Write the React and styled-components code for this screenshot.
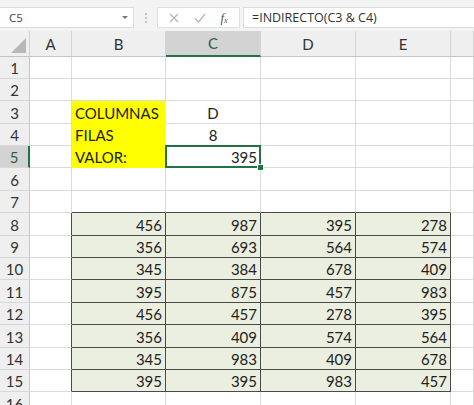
import React from 'react'
import styled, { createGlobalStyle } from 'styled-components'

const GlobalStyle = createGlobalStyle`
  html, body {
    margin: 0;
    padding: 0;
    background: #fff;
  }
`

const Window = styled.div`
  width: 474px;
  height: 405px;
  overflow: hidden;
  background: #fff;
  font-family: Lato, 'Open Sans', sans-serif;
`

const FormulaBar = styled.div`
  height: 31px;
  background: #f3f3f3;
  display: flex;
  align-items: flex-end;
  padding-bottom: 3px;
  box-sizing: border-box;
  font-family: 'Open Sans', 'Noto Sans', sans-serif;
`

const NameBox = styled.div`
  width: 134px;
  height: 21px;
  box-sizing: border-box;
  background: #fff;
  border: 1px solid #dcdcdc;
  border-left: none;
  display: flex;
  align-items: center;
  justify-content: space-between;
  padding: 0 5px 0 9px;
  font-size: 11.5px;
  color: #444;
`

const Caret = styled.span`
  width: 0;
  height: 0;
  border-left: 3px solid transparent;
  border-right: 3px solid transparent;
  border-top: 3px solid #777;
`

const Grip = styled.div`
  width: 23px;
  height: 21px;
  display: flex;
  flex-direction: column;
  align-items: center;
  justify-content: center;
  gap: 2px;

  span {
    width: 2px;
    height: 2px;
    background: #c2c2c2;
  }
`

const ButtonBox = styled.div`
  width: 83px;
  height: 21px;
  box-sizing: border-box;
  background: #fff;
  border: 1px solid #e0e0e0;
  display: flex;
  align-items: center;
  justify-content: space-around;
  padding: 0 4px;
`

const Fx = styled.span`
  font-family: 'Liberation Serif', serif;
  font-style: italic;
  font-size: 13px;
  color: #555;

  sub {
    font-size: 8px;
    vertical-align: -1px;
  }
`

const FormulaInput = styled.div`
  flex: 1;
  height: 21px;
  margin-left: 3px;
  box-sizing: border-box;
  background: #fff;
  border: 1px solid #dcdcdc;
  border-right: none;
  display: flex;
  align-items: center;
  padding-left: 8px;
  font-size: 12.5px;
  color: #333;
`

const Sheet = styled.div`
  display: grid;
  grid-template-columns: 30px 42px 94px 95px 95px 95px 23px;
  grid-template-rows: 25.5px;
  grid-auto-rows: 22.4px;
`

const Corner = styled.div`
  position: relative;
  background: #efefef;
  border-right: 1px solid #d0d0d0;
  border-bottom: 1px solid #c4c4c4;
  box-sizing: border-box;

  &::after {
    content: '';
    position: absolute;
    right: 3px;
    bottom: 3px;
    width: 0;
    height: 0;
    border-left: 15px solid transparent;
    border-bottom: 15px solid #b8b8b8;
  }
`

const ColHead = styled.div`
  background: ${(p) => (p.$active ? '#d3d3d3' : '#efefef')};
  border-right: 1px solid #d4d4d4;
  border-bottom: ${(p) => (p.$active ? '2px solid #217346' : '1px solid #c4c4c4')};
  box-sizing: border-box;
  display: flex;
  align-items: center;
  justify-content: center;
  font-size: 15px;
  color: ${(p) => (p.$active ? '#2f5f43' : '#333')};
  padding-top: 1px;
`

const RowHead = styled.div`
  background: ${(p) => (p.$active ? '#d3d3d3' : '#efefef')};
  border-right: ${(p) => (p.$active ? '2px solid #217346' : '1px solid #c4c4c4')};
  border-bottom: 1px solid #d8d8d8;
  box-sizing: border-box;
  display: flex;
  align-items: flex-end;
  justify-content: center;
  padding-bottom: 1px;
  font-size: 15px;
  line-height: 18px;
  color: ${(p) => (p.$active ? '#2f5f43' : '#333')};
`

const Cell = styled.div`
  position: relative;
  background: ${(p) => p.$fill || '#fff'};
  border-right: 1px solid ${(p) => p.$right};
  border-bottom: 1px solid ${(p) => p.$bottom};
  box-sizing: border-box;
  display: flex;
  align-items: flex-end;
  justify-content: ${(p) =>
    p.$align === 'right' ? 'flex-end' : p.$align === 'center' ? 'center' : 'flex-start'};
  padding: 0 3px 1px 3px;
  font-size: 15px;
  line-height: 18px;
  color: #222;
  white-space: nowrap;

  ${(p) =>
    p.$selected &&
    `
    &::before {
      content: '';
      position: absolute;
      left: -1px;
      top: -1px;
      right: -1px;
      bottom: -1px;
      border: 2px solid #217346;
    }
    &::after {
      content: '';
      position: absolute;
      right: -4px;
      bottom: -4px;
      width: 5px;
      height: 5px;
      background: #217346;
      border: 1px solid #fff;
      z-index: 1;
    }
  `}
`

const COLS = ['A', 'B', 'C', 'D', 'E', 'F']

const table = [
  [456, 987, 395, 278],
  [356, 693, 564, 574],
  [345, 384, 678, 409],
  [395, 875, 457, 983],
  [456, 457, 278, 395],
  [356, 409, 574, 564],
  [345, 983, 409, 678],
  [395, 395, 983, 457],
]

const labels = {
  3: ['COLUMNAS', 'D'],
  4: ['FILAS', '8'],
  5: ['VALOR:', '395'],
}

const GRID = '#dadada'
const DARK = '#4a4a4a'
const YELLOW = '#ffff00'
const GREEN = '#ebefdf'

const cellProps = (r, c) => {
  const inTable = r >= 8 && r <= 15 && c >= 1 && c <= 4
  const yellow = c === 1 && r >= 3 && r <= 5
  let right = GRID
  let bottom = GRID
  if (r >= 8 && r <= 15 && c <= 4) right = DARK
  if (r >= 7 && r <= 15 && c >= 1 && c <= 4) bottom = DARK
  if (yellow) {
    right = YELLOW
    bottom = YELLOW
  }
  let text = ''
  let align = 'left'
  if (inTable) {
    text = table[r - 8][c - 1]
    align = 'right'
  } else if (labels[r] && c === 1) {
    text = labels[r][0]
  } else if (labels[r] && c === 2) {
    text = labels[r][1]
    align = r === 5 ? 'right' : 'center'
  }
  return {
    text,
    align,
    right,
    bottom,
    fill: yellow ? YELLOW : inTable ? GREEN : null,
    selected: r === 5 && c === 2,
  }
}

const Cross = () => (
  <svg width="10" height="10" viewBox="0 0 10 10">
    <path d="M1 1L9 9M9 1L1 9" stroke="#b5b5b5" strokeWidth="1.2" />
  </svg>
)

const Check = () => (
  <svg width="12" height="10" viewBox="0 0 12 10">
    <path d="M1 5.5L4.5 9L11 1" stroke="#b5b5b5" strokeWidth="1.2" fill="none" />
  </svg>
)

export default function App() {
  const rows = Array.from({ length: 16 }, (_, i) => i + 1)
  return (
    <Window>
      <GlobalStyle />
      <FormulaBar>
        <NameBox>
          C5
          <Caret />
        </NameBox>
        <Grip>
          <span />
          <span />
          <span />
        </Grip>
        <ButtonBox>
          <Cross />
          <Check />
          <Fx>
            f<sub>x</sub>
          </Fx>
        </ButtonBox>
        <FormulaInput>=INDIRECTO(C3 &amp; C4)</FormulaInput>
      </FormulaBar>
      <Sheet>
        <Corner />
        {COLS.map((c) => (
          <ColHead key={c} $active={c === 'C'}>
            {c === 'F' ? '' : c}
          </ColHead>
        ))}
        {rows.map((r) => (
          <React.Fragment key={r}>
            <RowHead $active={r === 5}>{r}</RowHead>
            {COLS.map((col, c) => {
              const p = cellProps(r, c)
              return (
                <Cell
                  key={col}
                  $fill={p.fill}
                  $right={p.right}
                  $bottom={p.bottom}
                  $align={p.align}
                  $selected={p.selected}
                >
                  {p.text}
                </Cell>
              )
            })}
          </React.Fragment>
        ))}
      </Sheet>
    </Window>
  )
}
